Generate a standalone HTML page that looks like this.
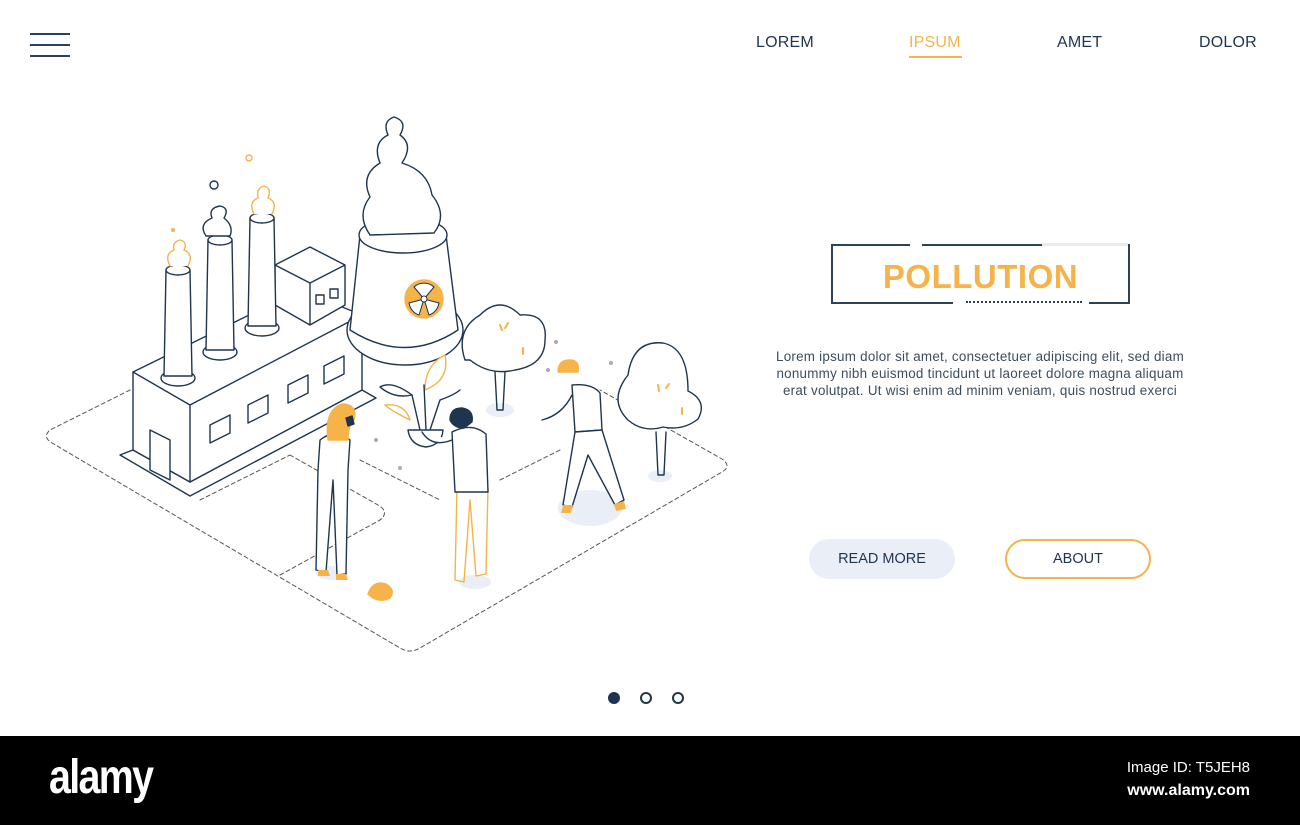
<!DOCTYPE html>
<html><head><meta charset="utf-8"><style>
*{margin:0;padding:0;box-sizing:border-box}
body{width:1300px;height:825px;background:#fff;position:relative;overflow:hidden;font-family:"Liberation Sans",sans-serif;color:#1e3550}
.nav{position:absolute;top:34px;font-size:16px;letter-spacing:0.2px}
.burger{position:absolute;left:30px;width:40px;height:2px;background:#2b4257}
.title{position:absolute;left:831px;top:244px;width:299px;height:60px;border:2px solid #2b4257}
.title span{position:absolute;left:0;right:0;top:12px;text-align:center;font-size:33px;font-weight:bold;color:#f5b34a;letter-spacing:0.5px}
.gap{position:absolute;background:#fff}
p.txt{position:absolute;left:755px;top:348px;width:450px;text-align:center;font-size:13.4px;letter-spacing:0.25px;line-height:17px;color:#3c4d5e}
.btn{position:absolute;top:539px;width:146px;height:40px;border-radius:20px;font-size:14.5px;text-align:center;line-height:40px}
.dot{position:absolute;top:692px;width:12px;height:12px;border-radius:50%;border:2px solid #1e3550}
.foot{position:absolute;left:0;top:736px;width:1300px;height:89px;background:#000;color:#fff}
</style></head><body>
<div class="burger" style="top:33px"></div><div class="burger" style="top:44px"></div><div class="burger" style="top:55px"></div>
<div class="nav" style="left:756px">LOREM</div>
<div class="nav" style="left:909px;color:#f5b34a">IPSUM</div>
<div style="position:absolute;left:909px;top:56px;width:53px;height:2px;background:#f5b34a"></div>
<div class="nav" style="left:1057px">AMET</div>
<div class="nav" style="left:1199px">DOLOR</div>

<div class="title"><span>POLLUTION</span></div>
<div class="gap" style="left:910px;top:243px;width:12px;height:4px"></div>
<div class="gap" style="left:1042px;top:243px;width:86px;height:3px;background:#e9ecef"></div>
<div class="gap" style="left:953px;top:301px;width:136px;height:5px"></div>
<div style="position:absolute;left:966px;top:301px;width:116px;border-top:2px dotted #2b4257"></div>
<p class="txt">Lorem ipsum dolor sit amet, consectetuer adipiscing elit, sed diam<br>nonummy nibh euismod tincidunt ut laoreet dolore magna aliquam<br>erat volutpat. Ut wisi enim ad minim veniam, quis nostrud exerci</p>
<div class="btn" style="left:809px;background:#e9eef7">READ MORE</div>
<div class="btn" style="left:1005px;border:2px solid #f5b34a;line-height:36px">ABOUT</div>

<div class="dot" style="left:608px;background:#1e3550"></div>
<div class="dot" style="left:640px"></div>
<div class="dot" style="left:672px"></div>

<svg style="position:absolute;left:0;top:0" width="760" height="700" viewBox="0 0 760 700" fill="none" stroke="#1e3550" stroke-width="1.4" stroke-linejoin="round" stroke-linecap="round">
<g stroke="#555" stroke-dasharray="4 3" stroke-width="1">
<path d="M130 390 L50 430 Q42 437 52 443 L400 648 Q410 654 420 648 L722 472 Q732 466 722 459 L600 390"/>
<path d="M200 500 L290 455 M280 575 L380 520 Q390 512 378 505 L290 455 M360 460 L440 500 M500 480 L560 450"/>
</g>
<g fill="#e9eef7" stroke="none">
<ellipse cx="590" cy="508" rx="32" ry="18"/><ellipse cx="500" cy="410" rx="14" ry="7"/><ellipse cx="660" cy="476" rx="12" ry="6"/><ellipse cx="332" cy="573" rx="16" ry="7"/><ellipse cx="475" cy="582" rx="16" ry="7"/>
</g>
<path fill="#fff" d="M120 455 L190 496 L376 398 L362 390 L190 482 L133 450 Z"/>
<path fill="#fff" d="M133 372 L190 405 L362 315 L362 390 L190 482 L133 450 Z"/>
<path d="M190 405 L190 482 M133 372 L300 290 L362 315"/>
<path fill="#fff" d="M150 430 L150 470 L170 480 L170 440 Z"/>
<g fill="#fff"><path d="M210 425 l20 -10 v18 l-20 10z"/><path d="M248 405 l20 -10 v18 l-20 10z"/><path d="M288 385 l20 -10 v18 l-20 10z"/><path d="M324 366 l20 -10 v18 l-20 10z"/></g>
<path fill="#fff" d="M275 265 L310 247 L345 265 L345 305 L310 325 L275 305 Z M275 265 L310 283 L345 265 M310 283 V325"/>
<g fill="#fff"><rect x="316" y="295" width="8" height="9"/><rect x="330" y="289" width="8" height="9"/></g>
<g fill="#fff">
<ellipse cx="178" cy="378" rx="17" ry="8"/><path d="M166 270 L164 376 L192 376 L190 270 Z"/><ellipse cx="178" cy="270" rx="12" ry="5"/>
<ellipse cx="220" cy="352" rx="17" ry="8"/><path d="M208 240 L206 350 L234 350 L232 240 Z"/><ellipse cx="220" cy="240" rx="12" ry="5"/>
<ellipse cx="262" cy="328" rx="17" ry="8"/><path d="M250 218 L248 326 L276 326 L274 218 Z"/><ellipse cx="262" cy="218" rx="12" ry="5"/>
</g>
<g stroke="#f5b34a" fill="#fff"><path d="M170 266 q-6 -12 4 -16 q-2 -8 6 -10 q8 2 4 10 q10 4 4 16"/><path d="M254 214 q-6 -12 4 -16 q-2 -10 6 -12 q8 2 4 12 q10 4 4 16"/></g>
<path fill="#fff" d="M206 236 q-8 -12 6 -18 q-4 -10 8 -12 q10 2 4 12 q10 8 6 18 Z"/>
<circle cx="214" cy="185" r="4"/><circle cx="249" cy="158" r="3" stroke="#f5b34a"/>
<circle cx="173" cy="230" r="2" fill="#f5b34a" stroke="none"/>
<ellipse cx="405" cy="330" rx="58" ry="35" fill="#fff"/>
<path fill="#fff" d="M360 235 L350 330 Q405 365 458 330 L446 235 Z"/>
<ellipse cx="403" cy="235" rx="44" ry="18" fill="#fff"/>
<path fill="#fff" d="M370 235 q-14 -20 0 -38 q-10 -22 10 -34 q-8 -20 8 -28 q-6 -14 6 -18 q14 4 6 18 q14 10 2 28 q26 8 30 32 q16 20 2 38 Z"/>
<circle cx="424" cy="299" r="19" fill="#f5b34a" stroke="#f5b34a"/>
<g fill="#fff" stroke="#1e3550" stroke-width="1"><path d="M424 299 l-10 -12 a15 15 0 0 1 20 0 z"/><path d="M424 299 l15 4 a15 15 0 0 1 -10 12 z"/><path d="M424 299 l-5 16 a15 15 0 0 1 -10 -12 z"/><circle cx="424" cy="299" r="3"/></g>
<path fill="#fff" d="M465 360 q-10 -30 15 -45 q20 -20 40 0 q28 -2 25 25 q0 25 -30 30 q-25 6 -45 -10 Z"/>
<path d="M495 372 L497 410 L503 410 L505 372"/>
<path fill="#fff" d="M628 420 q-20 -20 0 -45 q5 -35 35 -32 q25 5 25 48 q20 10 10 28 q-15 12 -35 8 q-20 6 -35 -7 Z"/>
<path d="M656 432 L658 475 L664 475 L666 432"/>
<g stroke="#f5b34a" stroke-width="2"><path d="M500 325 l2 5 M508 323 l-3 5 M523 348 l0 6 M658 385 l1 6 M666 388 l3 -4 M682 408 l0 6"/></g>
<path stroke="#f5b34a" fill="#fff" d="M425 390 q0 -25 20 -35 q5 25 -20 35 Z M410 420 q-20 -10 -25 -15 q20 -2 25 15"/>
<path fill="#fff" d="M408 430 L443 430 Q442 445 426 447 Q410 445 408 430 Z M420 430 L412 395 M430 430 L440 400 M426 430 L424 385 M412 395 q-20 -15 -32 -8 q14 12 32 8 M440 400 q14 -5 20 -10"/>
<path fill="#fff" d="M320 440 L318 470 L316 570 L326 572 L333 480 L337 575 L346 574 L348 470 L350 440 Q335 428 320 440 Z"/>
<path fill="#f5b34a" stroke="#f5b34a" d="M328 440 q-4 -30 14 -36 q16 0 12 16 q-6 6 -6 20 Z"/>
<path fill="#1e3550" d="M346 418 l6 -2 l2 8 l-6 2z"/>
<path fill="#f5b34a" stroke="none" d="M318 570 h10 l2 6 h-12z M336 574 h10 l2 6 h-12z"/>
<path stroke="#f5b34a" d="M457 488 L455 580 L464 582 L470 500 L476 576 L486 574 L488 488"/>
<path fill="#fff" d="M452 432 q20 -10 34 2 L488 492 L455 492 Z M452 440 q-20 8 -30 -8"/>
<path fill="#1e3550" d="M450 420 q0 -12 12 -12 q12 2 10 14 l-8 6 q-10 0 -14 -8 Z"/>
<path fill="#f5b34a" stroke="#f5b34a" d="M558 372 q0 -12 12 -12 q10 0 8 12 Z"/>
<path fill="#fff" d="M572 385 q20 -2 28 8 L602 430 L575 432 Z M572 395 q-10 20 -30 25"/>
<path fill="#fff" d="M575 432 L563 505 L572 507 L588 455 L615 505 L624 500 L602 430 Z"/>
<path fill="#f5b34a" stroke="none" d="M563 505 h10 l-2 8 h-10z M614 504 l10 -3 l2 8 l-10 2z"/>
<path fill="#f5b34a" stroke="#f5b34a" d="M368 594 q5 -14 18 -10 q10 6 4 14 q-12 6 -22 -4 Z"/>
<g fill="#aab" stroke="none"><circle cx="376" cy="440" r="2"/><circle cx="400" cy="468" r="2"/><circle cx="556" cy="342" r="2"/><circle cx="548" cy="370" r="2"/><circle cx="611" cy="363" r="2"/></g>
</svg>

<div class="foot">
<div style="position:absolute;left:49px;top:14px;font-size:48px;font-weight:bold;letter-spacing:-2px;transform:scaleX(0.82);transform-origin:left">alamy</div>
<div style="position:absolute;right:50px;top:23px;font-size:15px">Image ID: T5JEH8</div>
<div style="position:absolute;right:50px;top:46px;font-size:16px;font-weight:bold">www.alamy.com</div>
</div>
</body></html>
